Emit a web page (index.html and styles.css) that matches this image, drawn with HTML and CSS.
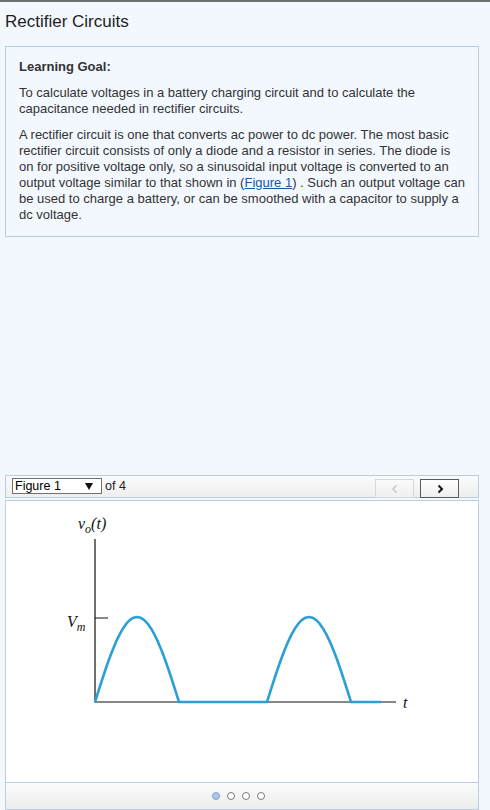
FILE: index.html
```html
<!DOCTYPE html>
<html>
<head>
<meta charset="utf-8">
<link rel="stylesheet" href="styles.css">
</head>
<body>
<div class="topline"></div>
<h1 class="title">Rectifier Circuits</h1>
<div class="intro">
  <p class="goal">Learning Goal:</p>
  <p>To calculate voltages in a battery charging circuit and to calculate the capacitance needed in rectifier circuits.</p>
  <p>A rectifier circuit is one that converts ac power to dc power. The most basic rectifier circuit consists of only a diode and a resistor in series. The diode is on for positive voltage only, so a sinusoidal input voltage is converted to an output voltage similar to that shown in (<a href="#" class="link">Figure 1</a>) . Such an output voltage can be used to charge a battery, or can be smoothed with a capacitor to supply a dc voltage.</p>
</div>

<div class="figpanel">
  <div class="toolbar">
    <div class="select"><span>Figure 1</span><svg class="arrow" width="8" height="7" viewBox="0 0 8 7"><path d="M0 0 H8 L4 7 Z" fill="#111"/></svg></div>
    <span class="of">of 4</span>
    <div class="navs">
      <button class="nav disabled"><svg width="8" height="10" viewBox="0 0 8 10"><path d="M5.5 1.5 L2 5 L5.5 8.5" fill="none" stroke="#c8c8c8" stroke-width="1.6"/></svg></button>
      <button class="nav next"><svg width="8" height="10" viewBox="0 0 8 10"><path d="M2.5 1.5 L6 5 L2.5 8.5" fill="none" stroke="#111" stroke-width="2"/></svg></button>
    </div>
  </div>
  <div class="figbody">
    <svg class="graph" width="472" height="281" viewBox="6 501 472 281">
      <line x1="95" y1="539" x2="95" y2="702.5" stroke="#111" stroke-width="1.2"/>
      <line x1="95" y1="702" x2="396" y2="702" stroke="#111" stroke-width="1.2"/>
      <line x1="95" y1="618" x2="108" y2="618" stroke="#111" stroke-width="1"/>
      <polyline fill="none" stroke="#2b9fd6" stroke-width="2.6" stroke-linejoin="round"
        points="95,702 98.5,690.9 102,680 105.5,669.5 109,659.5 112.5,650.3 116,641.9 119.5,634.6 123,628.4 126.5,623.4 130,619.9 133.5,617.7 137,617 140.5,617.7 144,619.9 147.5,623.4 151,628.4 154.5,634.6 158,641.9 161.5,650.3 165,659.5 168.5,669.5 172,680 175.5,690.9 179,702 267,702 270.5,690.9 274,680 277.5,669.5 281,659.5 284.5,650.3 288,641.9 291.5,634.6 295,628.4 298.5,623.4 302,619.9 305.5,617.7 309,617 312.5,617.7 316,619.9 319.5,623.4 323,628.4 326.5,634.6 330,641.9 333.5,650.3 337,659.5 340.5,669.5 344,680 347.5,690.9 351,702 381,702"/>
      <text class="math" x="78" y="529">v<tspan class="sub" dy="4">o</tspan><tspan dy="-4">(t)</tspan></text>
      <text class="math" x="67" y="627">V<tspan class="sub" dy="4">m</tspan></text>
      <text class="math" x="403" y="708">t</text>
    </svg>
  </div>
  <div class="footer">
    <span class="dot active"></span>
    <span class="dot"></span>
    <span class="dot"></span>
    <span class="dot"></span>
  </div>
</div>
</body>
</html>
```
FILE: styles.css
```css
html, body {
  margin: 0;
  padding: 0;
}
body {
  background: #f3f8fe;
  font-family: "Liberation Sans", Arial, sans-serif;
  color: #333;
  width: 490px;
  height: 810px;
  overflow: hidden;
}
.topline {
  height: 2px;
  background: #6e6e6e;
}
.title {
  margin: 0;
  padding: 10px 0 0 5px;
  font-size: 17px;
  font-weight: normal;
  line-height: 20px;
  color: #1e1e1e;
  height: 24px;
}
.intro {
  margin: 10px 0 0 5px;
  width: 474px;
  min-height: 191px;
  border: 1px solid #bccde0;
  padding: 12px 13px 13px 13px;
  box-sizing: border-box;
}
.intro p {
  margin: 0 0 10px 0;
  font-size: 13px;
  line-height: 16px;
}
.intro p:last-child {
  margin-bottom: 0;
}
.intro .goal {
  font-size: 13px;
  font-weight: bold;
}
.link {
  color: #1659a8;
  text-decoration: underline;
}
.figpanel {
  margin: 238px 0 0 5px;
  width: 474px;
}
.toolbar {
  height: 23px;
  box-sizing: border-box;
  border: 1px solid #bccde0;
  background: linear-gradient(#fbfbfb, #eeeeee);
  display: flex;
  align-items: flex-start;
  padding: 2px 0 0 6px;
}
.select {
  width: 90px;
  height: 16px;
  box-sizing: border-box;
  border: 1px solid #707070;
  background: #fff;
  display: flex;
  align-items: center;
  justify-content: space-between;
  padding: 0 8px 0 2px;
  font-size: 12.5px;
  color: #000;
}
.arrow {
  display: block;
}
.of {
  font-size: 12.5px;
  line-height: 16px;
  margin-left: 3px;
  color: #222;
}
.navs {
  margin-left: auto;
  margin-right: 19px;
  display: flex;
  gap: 6px;
  padding-top: 1px;
}
.nav {
  width: 39px;
  height: 19px;
  box-sizing: border-box;
  padding: 0;
  margin: 0;
  display: flex;
  align-items: center;
  justify-content: center;
  background: linear-gradient(#ffffff, #eeeeee);
}
.nav.disabled {
  border: 1px solid #d8d8d8;
  background: linear-gradient(#fafafa, #f0f0f0);
}
.nav.next {
  border: 1px solid #5a5a5a;
}
.figbody {
  margin-top: 2px;
  background: #fff;
  border: 1px solid #bccde0;
  border-bottom: none;
  height: 282px;
  box-sizing: border-box;
}
.graph {
  display: block;
}
.math {
  font-family: "Liberation Serif", "Times New Roman", serif;
  font-style: italic;
  font-size: 16px;
  fill: #111;
}
.sub {
  font-size: 12px;
}
.footer {
  height: 28px;
  box-sizing: border-box;
  border: 1px solid #bccde0;
  background: linear-gradient(#fcfcfc, #ececec);
  display: flex;
  align-items: center;
  justify-content: center;
  gap: 7px;
  padding-right: 7px;
}
.dot {
  width: 8px;
  height: 8px;
  box-sizing: border-box;
  border-radius: 50%;
  border: 1px solid #7a7a7a;
  background: #fff;
}
.dot.active {
  background: #a9c8f2;
  border-color: #8aa0bb;
}
```
